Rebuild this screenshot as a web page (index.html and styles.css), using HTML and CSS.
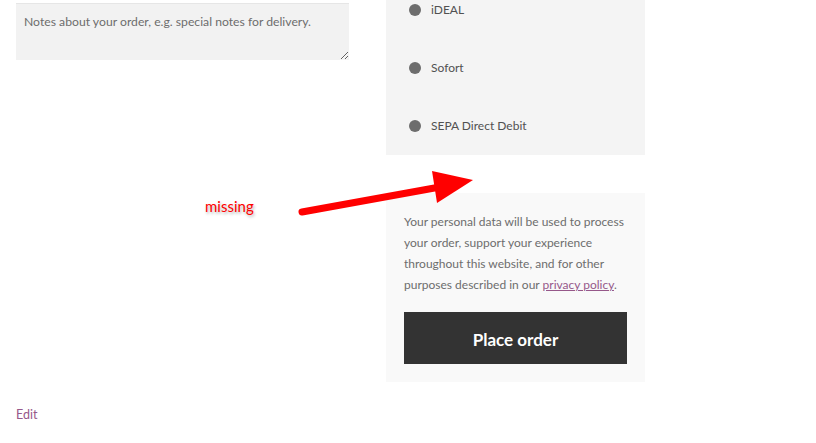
FILE: index.html
```html
<!DOCTYPE html>
<html>
<head>
<meta charset="utf-8">
<link rel="stylesheet" href="styles.css">
</head>
<body>
<div class="page">
  <div class="columns">
    <div class="col-left">
      <textarea class="notes" placeholder="Notes about your order, e.g. special notes for delivery."></textarea>
    </div>
    <div class="col-right">
      <ul class="methods">
        <li class="method"><span class="radio"></span><span class="method-label">iDEAL</span></li>
        <li class="method"><span class="radio"></span><span class="method-label">Sofort</span></li>
        <li class="method"><span class="radio"></span><span class="method-label">SEPA Direct Debit</span></li>
      </ul>
      <div class="place">
        <p class="privacy">Your personal data will be used to process your order, support your experience throughout this website, and for other purposes described in our <a href="#" class="link">privacy policy</a>.</p>
        <button class="btn">Place order</button>
      </div>
    </div>
  </div>
  <a href="#" class="edit">Edit</a>

  <div class="annotation">
    <span class="missing">missing</span>
    <svg class="arrow" width="816" height="443" viewBox="0 0 816 443">
      <line x1="302" y1="212" x2="440" y2="187" stroke="#ff0000" stroke-width="7" stroke-linecap="round"/>
      <polygon points="432,171 473,180 437,203" fill="#ff0000"/>
    </svg>
  </div>
</div>
</body>
</html>
```

FILE: styles.css
```css
html, body {
  margin: 0;
  padding: 0;
  background: #ffffff;
}
body {
  font-family: "Lato", "Open Sans", sans-serif;
  width: 816px;
  height: 443px;
  overflow: hidden;
}
.page {
  position: relative;
  width: 816px;
  height: 443px;
}
.columns {
  display: flex;
  gap: 37px;
  padding-left: 16px;
}
.col-left {
  width: 333px;
  padding-top: 3px;
}
.notes {
  display: block;
  box-sizing: border-box;
  width: 333px;
  height: 57px;
  margin: 0;
  border: none;
  border-top: 1px solid #e6e6e6;
  background: #f2f2f2;
  padding: 10px 8px 8px 8px;
  font-family: "Lato", "Open Sans", sans-serif;
  font-size: 12.2px;
  line-height: 16px;
  color: #555;
  resize: vertical;
  outline: none;
}
.notes::placeholder {
  color: #6d6d6d;
  opacity: 1;
}
.col-right {
  width: 259px;
  display: flex;
  flex-direction: column;
  gap: 38px;
}
.methods {
  list-style: none;
  margin: 0;
  padding: 0 0 0 23px;
  background: #f4f4f4;
  height: 155px;
  box-sizing: border-box;
  display: flex;
  flex-direction: column;
  gap: 40px;
}
.method {
  display: flex;
  align-items: center;
  gap: 10px;
  height: 18px;
}
.method:first-child {
  margin-top: 0;
}
.radio {
  width: 12px;
  height: 12px;
  border-radius: 50%;
  background: #6d6d6d;
  flex: none;
  margin-top: 1px;
}
.method-label {
  font-size: 12px;
  color: #515151;
}
.place {
  background: #f9f9f9;
  padding: 18px 18px 18px 18px;
}
.privacy {
  margin: 0 0 17px 0;
  font-size: 12px;
  line-height: 21px;
  color: #6d6d6d;
}
.link {
  color: #96588a;
  text-decoration: underline;
}
.btn {
  display: block;
  width: 100%;
  height: 52px;
  border: none;
  background: #333333;
  color: #ffffff;
  font-family: "Lato", "Open Sans", sans-serif;
  font-weight: 700;
  font-size: 17px;
  padding: 2px 0 0 0;
  cursor: pointer;
}
.edit {
  display: inline-block;
  margin: 25px 0 0 16px;
  font-size: 12.5px;
  color: #96588a;
  text-decoration: none;
}
.annotation {
  position: absolute;
  left: 0;
  top: 0;
  width: 816px;
  height: 443px;
  pointer-events: none;
}
.arrow {
  position: absolute;
  left: 0;
  top: 0;
}
.missing {
  position: absolute;
  left: 205px;
  top: 197px;
  font-size: 15px;
  color: #ff0000;
  text-shadow: 1px 2px 3px rgba(0,0,0,0.3);
}
```
